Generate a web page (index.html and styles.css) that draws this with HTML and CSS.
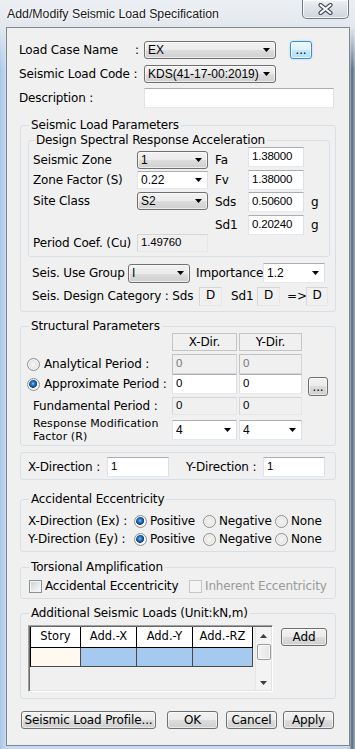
FILE: index.html
```html
<!DOCTYPE html>
<html>
<head>
<meta charset="utf-8">
<title>Add/Modify Seismic Load Specification</title>
<link rel="stylesheet" href="styles.css">
</head>
<body>
<div class="window">
  <div class="titlebar">
    <span class="title">Add/Modify Seismic Load Specification</span>
    <div class="close">
      <svg width="15" height="12" viewBox="0 0 15 12"><path d="M2.5 2L12.5 10M12.5 2L2.5 10" stroke="#46505c" stroke-width="4.2" stroke-linecap="round"/><path d="M2.5 2L12.5 10M12.5 2L2.5 10" stroke="#fff" stroke-width="2" stroke-linecap="round"/></svg>
    </div>
  </div>
  <div class="client">
    <div class="row r1">
      <div class="lbl l125 lname"><span>Load Case Name</span><span class="colon">:</span></div>
      <div class="combo list w132"><span class="val num">EX</span><svg class="arr" width="7" height="4" viewBox="0 0 7 4"><path d="M0 0H7L3.5 4Z"/></svg></div>
      <div class="btn focus dots1">...</div>
    </div>
    <div class="row r2">
      <div class="lbl l125">Seismic Load Code :</div>
      <div class="combo list w132"><span class="val num">KDS(41-17-00:2019)</span><svg class="arr" width="7" height="4" viewBox="0 0 7 4"><path d="M0 0H7L3.5 4Z"/></svg></div>
    </div>
    <div class="row r3">
      <div class="lbl l125">Description :</div>
      <div class="tb w190"></div>
    </div>

    <fieldset class="grp g1">
      <legend>Seismic Load Parameters</legend>
      <fieldset class="grp inner">
        <legend>Design Spectral Response Acceleration</legend>
        <div class="dsra">
          <div class="lcol">
            <div class="frow lf1"><span class="lbl l104">Seismic Zone</span><div class="combo list w71"><span class="val num">1</span><svg class="arr" width="7" height="4" viewBox="0 0 7 4"><path d="M0 0H7L3.5 4Z"/></svg></div></div>
            <div class="frow lf2"><span class="lbl l104">Zone Factor (S)</span><div class="combo edit w71"><span class="val num">0.22</span><svg class="arr" width="7" height="4" viewBox="0 0 7 4"><path d="M0 0H7L3.5 4Z"/></svg></div></div>
            <div class="frow lf3"><span class="lbl l104">Site Class</span><div class="combo list w71"><span class="val num">S2</span><svg class="arr" width="7" height="4" viewBox="0 0 7 4"><path d="M0 0H7L3.5 4Z"/></svg></div></div>
            <div class="frow lf4"><span class="lbl l104">Period Coef. (Cu)</span><div class="ro w71 tv">1.49760</div></div>
          </div>
          <div class="rcol">
            <div class="frow rf1"><span class="lbl l33 fa">Fa</span><div class="tb w56 tv">1.38000</div></div>
            <div class="frow rf2"><span class="lbl l33">Fv</span><div class="tb w56 tv">1.38000</div></div>
            <div class="frow rf3"><span class="lbl l33">Sds</span><div class="tb w56 tv">0.50600</div><span class="unit">g</span></div>
            <div class="frow rf4"><span class="lbl l33">Sd1</span><div class="tb w56 tv">0.20240</div><span class="unit">g</span></div>
          </div>
        </div>
      </fieldset>
      <div class="row use">
        <span class="lbl l96">Seis. Use Group</span>
        <div class="combo list w62 h19"><span class="val num">I</span><svg class="arr" width="7" height="4" viewBox="0 0 7 4"><path d="M0 0H7L3.5 4Z"/></svg></div>
        <span class="lbl imp">Importance</span>
        <div class="combo edit w62 h20"><span class="val num">1.2</span><svg class="arr" width="7" height="4" viewBox="0 0 7 4"><path d="M0 0H7L3.5 4Z"/></svg></div>
      </div>
      <div class="row cat">
        <span class="lbl l167">Seis. Design Category : Sds</span>
        <div class="ro dbox w23">D</div>
        <span class="lbl sd1">Sd1</span>
        <div class="ro dbox w23">D</div>
        <span class="lbl arrow">=&gt;</span>
        <div class="ro dbox w22">D</div>
      </div>
    </fieldset>

    <fieldset class="grp g2">
      <legend>Structural Parameters</legend>
      <div class="srow hdr"><div class="slbl"></div><div class="hbox c65">X-Dir.</div><div class="hbox c63">Y-Dir.</div></div>
      <div class="srow san"><div class="slbl rl"><span class="radio"></span><span>Analytical Period :</span></div><div class="tb dis c65 tv">0</div><div class="tb dis c63 tv">0</div></div>
      <div class="srow sap"><div class="slbl rl"><span class="radio on"></span><span>Approximate Period :</span></div><div class="tb c65 tv">0</div><div class="tb c63 tv">0</div><div class="btn dots2">...</div></div>
      <div class="srow sfp"><div class="slbl pl">Fundamental Period :</div><div class="ro c65 tv">0</div><div class="ro c63 tv">0</div></div>
      <div class="srow srm"><div class="slbl pl two"><span class="ln">Response Modification</span><span class="ln">Factor (R)</span></div><div class="combo edit c65 h20"><span class="val num">4</span><svg class="arr" width="7" height="4" viewBox="0 0 7 4"><path d="M0 0H7L3.5 4Z"/></svg></div><div class="combo edit c63 h20"><span class="val num">4</span><svg class="arr" width="7" height="4" viewBox="0 0 7 4"><path d="M0 0H7L3.5 4Z"/></svg></div></div>
    </fieldset>

    <fieldset class="grp g3">
      <div class="row xy">
        <span class="lbl l79">X-Direction :</span>
        <div class="tb w62 tv">1</div>
        <span class="lbl ydir">Y-Direction :</span>
        <div class="tb w62 tv">1</div>
      </div>
    </fieldset>

    <fieldset class="grp g4">
      <legend>Accidental Eccentricity</legend>
      <div class="row ecc ecc1">
        <span class="lbl l106">X-Direction (Ex) :</span>
        <div class="opt o1"><span class="radio on"></span><span>Positive</span></div>
        <div class="opt o2"><span class="radio"></span><span>Negative</span></div>
        <div class="opt o3"><span class="radio"></span><span>None</span></div>
      </div>
      <div class="row ecc">
        <span class="lbl l106">Y-Direction (Ey) :</span>
        <div class="opt o1"><span class="radio on"></span><span>Positive</span></div>
        <div class="opt o2"><span class="radio"></span><span>Negative</span></div>
        <div class="opt o3"><span class="radio"></span><span>None</span></div>
      </div>
    </fieldset>

    <fieldset class="grp g5">
      <legend>Torsional Amplification</legend>
      <div class="row tors">
        <div class="opt t1"><span class="chk"></span><span>Accidental Eccentricity</span></div>
        <div class="opt t2 disabled"><span class="chk dis"></span><span>Inherent Eccentricity</span></div>
      </div>
    </fieldset>

    <fieldset class="grp g6">
      <legend>Additional Seismic Loads (Unit:kN,m)</legend>
      <div class="row addrow">
        <div class="grid">
          <div class="gtable">
            <div class="gr ghead"><div class="gc c1">Story</div><div class="gc c2">Add.-X</div><div class="gc c3">Add.-Y</div><div class="gc c4">Add.-RZ</div></div>
            <div class="gr gbody"><div class="gc c1 cream"></div><div class="gc c2 sel"></div><div class="gc c3 sel"></div><div class="gc c4 sel"></div></div>
          </div>
          <div class="vscroll">
            <div class="sbtn"><svg width="7" height="4" viewBox="0 0 7 4"><path d="M0 4H7L3.5 0Z"/></svg></div>
            <div class="thumb"></div>
            <div class="strack"></div>
            <div class="sbtn down"><svg width="7" height="4" viewBox="0 0 7 4"><path d="M0 0H7L3.5 4Z"/></svg></div>
          </div>
        </div>
        <div class="btn add">Add</div>
      </div>
    </fieldset>

    <div class="row bottom">
      <div class="btn b-prof">Seismic Load Profile...</div>
      <div class="btn b-ok">OK</div>
      <div class="btn b-cancel">Cancel</div>
      <div class="btn b-apply">Apply</div>
    </div>
  </div>
</div>
</body>
</html>
```

FILE: styles.css
```css
* { box-sizing: border-box; }
html, body { margin: 0; padding: 0; }
body {
  width: 355px;
  height: 749px;
  overflow: hidden;
  font-family: "DejaVu Sans", sans-serif;
  font-size: 12px;
  letter-spacing: -0.15px;
  color: #000;
}
.window {
  width: 355px;
  height: 749px;
  display: flex;
  flex-direction: column;
  background:
    linear-gradient(to bottom, #eceff3 0, #e3e8ee 27px, rgba(227,232,238,0) 70px),
    linear-gradient(90deg, #a9c6e8 0, #c6d9ee 6px, #c6d9ee 349px, #5b6673 352px, #9fb3c8 355px);
}
.titlebar {
  height: 27px;
  flex: none;
  display: flex;
  align-items: flex-start;
  justify-content: space-between;
}
.title {
  font-family: "Liberation Sans", sans-serif;
  font-size: 12.3px;
  letter-spacing: 0;
  line-height: 14px;
  margin: 7px 0 0 7px;
  color: #1a1a1a;
  text-shadow: 0 0 5px #fff, 0 0 3px #fff;
}
.close {
  width: 47px;
  height: 19px;
  margin-right: 6px;
  border: 1px solid #6f7a88;
  border-top: none;
  border-radius: 0 0 5px 5px;
  background: linear-gradient(#eef1f4 0, #dde2e8 50%, #cdd4dc 100%);
  box-shadow: inset 0 0 0 1px rgba(255,255,255,0.75);
  display: flex;
  align-items: center;
  justify-content: center;
}
.client {
  flex: none;
  margin-left: 6px;
  width: 344px;
  height: 719px;
  border: 1px solid #7d8895;
  background: #f0f0f0;
  padding: 0 0 0 12px;
}

/* generic */
.row { display: flex; align-items: center; }
.lbl { flex: none; white-space: nowrap; }
.l125 { width: 125px; }
.l104 { width: 104px; }
.l96 { width: 96px; }
.l33 { width: 33px; }
.l167 { width: 167px; }
.l79 { width: 79px; }
.l106 { width: 106px; }
.lname { display: flex; }
.lname .colon { margin-left: auto; margin-right: 5px; }

.w132 { width: 132px; }
.w190 { width: 190px; }
.w71 { width: 71px; }
.w62 { width: 62px; }
.w56 { width: 56px; }
.w23 { width: 23px; }
.w22 { width: 22px; }
.h19 { height: 19px !important; }
.h20 { height: 20px !important; }

.num {
  font-family: "Liberation Sans", sans-serif;
  font-size: 12px;
  letter-spacing: 0;
}
.tv {
  font-family: "Liberation Sans", sans-serif;
  font-size: 11.5px;
  letter-spacing: -0.2px;
}

.combo {
  flex: none;
  height: 18px;
  display: flex;
  align-items: center;
  padding-left: 3px;
  white-space: nowrap;
}
.combo .val { flex: 1; overflow: hidden; }
.combo .arr { flex: none; margin-right: 5px; }
.list {
  border: 1px solid #707070;
  border-radius: 3px;
  background: linear-gradient(#f2f2f2 0, #ebebeb 50%, #dddddd 50%, #cfcfcf 100%);
  box-shadow: inset 0 0 0 1px rgba(255,255,255,0.6);
}
.edit {
  background: #fff;
  border: 1px solid;
  border-color: #abadb3 #dbdfe6 #e3e9ef #e2e3ea;
}
.tb {
  flex: none;
  height: 20px;
  background: #fff;
  border: 1px solid;
  border-color: #abadb3 #dbdfe6 #e3e9ef #e2e3ea;
  padding: 0 0 0 3px;
  line-height: 16px;
  white-space: nowrap;
}
.tb.dis {
  background: #f0f0f0;
  border-color: #c2c2c2 #d6d6d6 #d6d6d6 #c2c2c2;
  color: #777;
}
.ro {
  flex: none;
  height: 18px;
  background: #f0f0f0;
  border: 1px solid;
  border-color: #d5d5d5 #e6e6e6 #e6e6e6 #d5d5d5;
  padding: 0 0 0 3px;
  line-height: 14px;
}
.btn {
  flex: none;
  height: 18px;
  display: flex;
  align-items: center;
  justify-content: center;
  border: 1px solid #707070;
  border-radius: 3px;
  background: linear-gradient(#f2f2f2 0, #ebebeb 50%, #dddddd 50%, #cfcfcf 100%);
  box-shadow: inset 0 0 0 1px rgba(255,255,255,0.55);
  white-space: nowrap;
}
.btn.focus {
  border-color: #3c8fca;
  background: linear-gradient(#eef8fe 0, #ddf1fc 50%, #c6e9fc 50%, #b3dff6 100%);
  box-shadow: inset 0 0 0 1px rgba(255,255,255,0.7), 0 0 2px #8fd3f7;
}

/* top rows */
.r1 { margin-top: 13px; height: 18px; }
.r2 { margin-top: 6px; height: 18px; }
.r3 { margin-top: 5px; height: 20px; }
.dots1 { width: 22px; height: 18px; margin-left: 14px; }

/* group boxes */
fieldset.grp {
  margin: 0 0 0 1px;
  padding: 0;
  width: 316px;
  border: 1px solid #d5dfe5;
  border-radius: 3px;
  min-inline-size: 0;
}
fieldset.grp > legend {
  padding: 0 2px;
  margin-left: 8px;
  line-height: 14px;
  font-size: 12px;
}
fieldset.g1 { margin-top: 10px; padding-bottom: 5px; }
fieldset.inner { margin: 1px 0 0 7px; width: 302px; padding-bottom: 4px; }
fieldset.inner > legend { margin-left: 5px; }

.dsra { display: flex; align-items: flex-start; padding-left: 4px; }
.lcol { width: 182px; flex: none; }
.frow { display: flex; align-items: center; }
.lf1 { margin-top: 4px; height: 18px; }
.lf2 { margin-top: 2px; height: 18px; }
.lf3 { margin-top: 3px; height: 18px; }
.lf4 { margin-top: 24px; height: 18px; }
.rf1 { height: 20px; }
.rf1 .fa { padding-top: 5px; }
.rf2 { margin-top: 3px; height: 20px; }
.rf3 { margin-top: 2px; height: 20px; }
.rf4 { margin-top: 3px; height: 20px; }
.unit { margin-left: 7px; }

.use { margin: 6px 0 0 11px; height: 20px; }
.imp { margin-left: 6px; width: 67px; }
.cat { margin: 3px 0 0 11px; height: 20px; }
.dbox { height: 19px; text-align: center; padding: 0; line-height: 15px; }
.sd1 { margin-left: 9px; width: 26px; }
.arrow { margin-left: 7px; width: 19px; }

/* structural */
fieldset.g2 { margin-top: 7px; padding-bottom: 5px; }
.srow { display: flex; align-items: center; height: 20px; }
.slbl { width: 151px; flex: none; white-space: nowrap; }
.c65 { width: 65px; flex: none; }
.c63 { width: 63px; flex: none; margin-left: 2px; }
.hdr { height: 18px; }
.hbox {
  height: 18px;
  background: #f0f0f0;
  border: 1px solid #c4c4c4;
  text-align: center;
  line-height: 16px;
}
.san { margin-top: 3px; }
.rl { display: flex; align-items: center; padding-left: 6px; }
.rl .radio { margin-right: 4px; }
.dots2 { width: 20px; height: 19px; margin-left: 6px; align-self: flex-start; margin-top: 3px; }
.sfp { margin-top: 3px; height: 18px; }
.pl { padding-left: 12px; }
.srm { margin-top: 5px; }
.two { display: flex; flex-direction: column; font-size: 11px; letter-spacing: 0.1px; line-height: 13px; }

/* x/y */
fieldset.g3 { margin-top: 6px; padding: 4px 0 2px 0; }
.xy { height: 20px; margin-left: 7px; }
.ydir { margin-left: 17px; width: 77px; }

/* eccentricity */
fieldset.g4 { margin-top: 12px; padding: 6px 0 3px 0; }
.ecc { height: 18px; margin-left: 7px; }
.opt { display: flex; align-items: center; flex: none; white-space: nowrap; }
.opt .radio, .opt .chk { margin-right: 3px; }
.o1 { width: 69px; }
.o2 { width: 72px; }
.radio {
  flex: none;
  width: 13px;
  height: 13px;
  border-radius: 50%;
  border: 1px solid #8e8f8f;
  background: radial-gradient(circle at 50% 50%, #f6f6f6 0, #e6e6e6 55%, #d0d0d0 100%);
  box-shadow: inset 0 0 0 1px #f7f7f7;
}
.radio.on {
  background: radial-gradient(circle at 45% 42%, #8fd0f8 0, #2f86d4 1.4px, #124f96 3.4px, #1a3f6b 3.9px, #f2f2f2 4.4px, #e2e2e2 100%);
}

/* torsional */
fieldset.g5 { margin-top: 8px; padding: 3px 0 3px 0; }
.tors { height: 18px; margin-left: 8px; }
.t1 { width: 160px; }
.chk {
  flex: none;
  width: 13px;
  height: 13px;
  border: 1px solid #8e8f8f;
  background: linear-gradient(135deg, #c9cdd3 0, #eef0f2 70%, #f9f9f9 100%);
  box-shadow: inset 0 0 0 1px #f4f4f4;
}
.chk.dis {
  border-color: #c6c6c6;
  background: #f4f4f4;
  box-shadow: none;
}
.disabled { color: #9a9a9a; }

/* additional loads */
fieldset.g6 { margin-top: 7px; padding: 5px 0 6px 0; }
.addrow { align-items: flex-start; margin-left: 7px; }
.grid {
  flex: none;
  width: 245px;
  height: 67px;
  display: flex;
  padding: 1px;
  border: 1px solid;
  border-color: #a0a0a0 #fff #fff #a0a0a0;
  box-shadow: inset 1px 1px 0 #696969, inset -1px -1px 0 #e3e3e3;
  background: #f0f0f0;
}
.gtable { width: 223px; flex: none; }
.gr { display: flex; }
.gc { flex: none; border-right: 1px solid #000; border-bottom: 1px solid #000; }
.ghead .gc {
  height: 21px;
  background: #fff;
  text-align: center;
  font-size: 11.5px;
  letter-spacing: 0;
  line-height: 19px;
}
.gbody .gc { height: 19px; border-color: #4a4a4a; }
.c1 { width: 51px; }
.c2 { width: 56px; }
.c3 { width: 56px; }
.c4 { width: 60px; }
.gc.c1 { border-left: 1px solid #000; }
.cream { background: #fff9ef; }
.sel { background: #a6c9f0; }
.vscroll {
  flex: none;
  width: 16px;
  margin-left: auto;
  display: flex;
  flex-direction: column;
  background: #f3f3f3;
  border-left: 1px solid #e6e6e6;
}
.sbtn { height: 17px; display: flex; align-items: center; justify-content: center; fill: #3c3c3c; }
.sbtn.down { align-items: flex-end; padding-bottom: 5px; }
.thumb {
  height: 16px;
  margin: 0 0 0 1px;
  width: 14px;
  border: 1px solid #999;
  border-radius: 2px;
  background: linear-gradient(90deg, #f4f4f4, #e4e4e4);
  box-shadow: inset 0 0 0 1px #fbfbfb;
}
.strack { flex: 1; }
.add { width: 46px; height: 18px; margin: 3px 0 0 8px; }

/* bottom buttons */
.bottom { margin-top: 12px; height: 18px; }
.b-prof { width: 135px; margin-left: 2px; }
.b-ok { width: 51px; margin-left: 11px; }
.b-cancel { width: 51px; margin-left: 8px; }
.b-apply { width: 51px; margin-left: 6px; }
```
